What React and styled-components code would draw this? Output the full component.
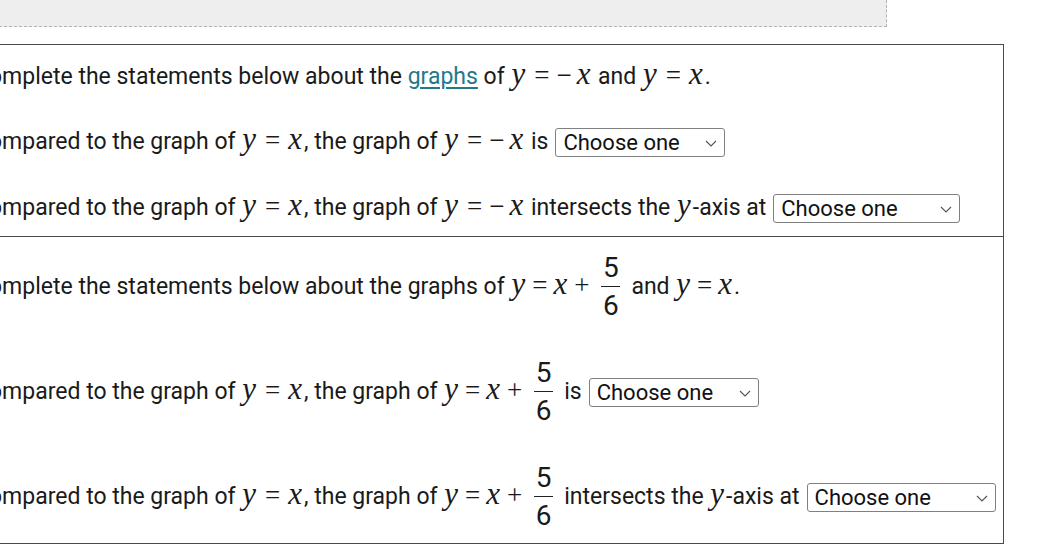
import styled, { createGlobalStyle } from 'styled-components';

const GlobalStyle = createGlobalStyle`
    html, body {
        margin: 0;
        padding: 0;
        background: #fff;
        overflow: hidden;
    }
    body {
        font-family: Roboto, "Liberation Sans", sans-serif;
        color: #1a1a1a;
    }
`

const Page = styled.div`
    width: 1100px;
    margin-left: -46px;
    display: flex;
    flex-direction: column;
    gap: 17px;
`

const GrayBar = styled.div`
    box-sizing: border-box;
    width: 933px;
    height: 27px;
    background: #eeeeee;
    border-right: 1px dashed #b4b4b4;
    border-bottom: 1px dashed #b4b4b4;
`

const Table = styled.div`
    box-sizing: border-box;
    width: 1050px;
    border: 1px solid #4a4a4a;
    display: flex;
    flex-direction: column;
`

const Section = styled.div`
    display: flex;
    flex-direction: column;
    gap: ${p => p.$gap}px;
    padding: ${p => p.$padTop}px 0 ${p => p.$padBottom}px 19px;
    & + & {
        border-top: 1px solid #4a4a4a;
    }
`

const Row = styled.div`
    height: ${p => p.$h}px;
    display: flex;
    align-items: center;
    font-size: 23px;
    white-space: nowrap;
`

const Line = styled.span`
    line-height: 30px;
`

const Link = styled.span`
    color: #23798c;
    text-decoration: underline;
    text-underline-offset: 3px;
`

const Var = styled.i`
    font-family: "Liberation Serif", "DejaVu Serif", serif;
    font-size: 31px;
    font-style: italic;
    margin: 0 1px;
    padding-right: 1px;
`

const Op = styled.span`
    font-family: "Liberation Serif", "DejaVu Serif", serif;
    font-size: 27px;
    margin: 0 ${p => (p.$tight ? 5 : 7)}px;
`

const Minus = styled.span`
    font-family: "Liberation Serif", "DejaVu Serif", serif;
    font-size: 27px;
    margin-right: 4px;
`

const Frac = styled.span`
    display: inline-flex;
    flex-direction: column;
    align-items: center;
    vertical-align: middle;
    margin: 0 11px 0 7px;
    font-size: 28px;
    line-height: 26px;
    position: relative;
    top: -1px;
`

const Bar = styled.span`
    width: 19px;
    height: 1px;
    background: #222;
    margin: 5px 0 6px;
`

const SelectWrap = styled.span`
    position: relative;
    display: inline-block;
    vertical-align: middle;
    margin-left: 7px;
`

const Select = styled.select`
    appearance: none;
    width: ${p => p.$w}px;
    height: 29px;
    padding: 0 0 0 7px;
    font-family: Roboto, "Liberation Sans", sans-serif;
    font-size: 22px;
    color: #111;
    background: #fff;
    border: 1px solid #808080;
    border-radius: 3px;
    outline: none;
`

const Chevron = styled.svg`
    position: absolute;
    right: 8px;
    top: 12px;
    pointer-events: none;
`

function Choose({ w }) {
    return (
        <SelectWrap>
            <Select $w={w} defaultValue="">
                <option value="">Choose one</option>
            </Select>
            <Chevron width="12" height="7" viewBox="0 0 12 7">
                <path d="M1 1 L6 6 L11 1" fill="none" stroke="#555" strokeWidth="1.1" />
            </Chevron>
        </SelectWrap>
    )
}

function Fraction() {
    return (
        <Frac>
            <span>5</span>
            <Bar />
            <span>6</span>
        </Frac>
    )
}

function App() {
    const yx = <><Var>y</Var><Op>=</Op><Var>x</Var></>
    const yNegX = <><Var>y</Var><Op>=</Op><Minus>−</Minus><Var>x</Var></>
    const yxPlus = (
        <>
            <Var>y</Var><Op $tight>=</Op><Var>x</Var><Op $tight>+</Op><Fraction />
        </>
    )

    return (
        <>
            <GlobalStyle />
            <Page>
                <GrayBar />
                <Table>
                    <Section $gap={32} $padTop={13} $padBottom={12}>
                        <Row $h={34}>
                            <Line>Complete the statements below about the <Link>graphs</Link> of {yNegX} and {yx}.</Line>
                        </Row>
                        <Row $h={34}>
                            <Line>Compared to the graph of {yx}, the graph of {yNegX} is<Choose w={170} /></Line>
                        </Row>
                        <Row $h={34}>
                            <Line>Compared to the graph of {yx}, the graph of {yNegX} intersects the <Var>y</Var>-axis at<Choose w={187} /></Line>
                        </Row>
                    </Section>
                    <Section $gap={41} $padTop={19} $padBottom={13}>
                        <Row $h={64}>
                            <Line>Complete the statements below about the graphs of {yxPlus}and <Var>y</Var><Op $tight>=</Op><Var>x</Var>.</Line>
                        </Row>
                        <Row $h={64}>
                            <Line>Compared to the graph of {yx}, the graph of {yxPlus}is<Choose w={170} /></Line>
                        </Row>
                        <Row $h={64}>
                            <Line>Compared to the graph of {yx}, the graph of {yxPlus}intersects the <Var>y</Var>-axis at<Choose w={189} /></Line>
                        </Row>
                    </Section>
                </Table>
            </Page>
        </>
    )
}

export default App
